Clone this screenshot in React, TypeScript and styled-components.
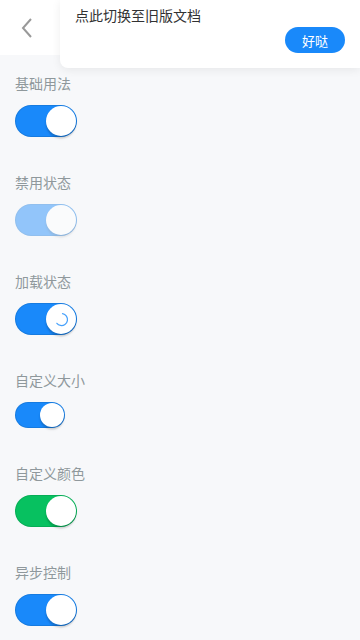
import React, { useState } from "react";
import styled, { createGlobalStyle } from "styled-components";

const GlobalStyle = createGlobalStyle`
  html, body {
    margin: 0;
    padding: 0;
    background: #f7f8fa;
    font-family: "Noto Sans CJK SC", "Noto Sans", sans-serif;
  }
  * { box-sizing: border-box; }
`;

const Page = styled.div`
  position: relative;
  width: 360px;
  min-height: 640px;
  background: #f7f8fa;
`;

const NavBar = styled.div`
  height: 55px;
  background: #fff;
  display: flex;
  align-items: center;
  padding-left: 20px;
`;

const Popup = styled.div`
  position: absolute;
  top: 0;
  left: 60px;
  right: 0;
  height: 68px;
  background: #fff;
  border-bottom-left-radius: 8px;
  box-shadow: 0 2px 10px rgba(0, 0, 0, 0.07);
  padding: 5px 15px 0;
  display: flex;
  flex-direction: column;
`;

const PopupText = styled.div`
  font-size: 14px;
  line-height: 20px;
  color: #323233;
`;

const OkButton = styled.button`
  align-self: flex-end;
  margin-top: 2px;
  width: 60px;
  height: 26px;
  border: none;
  border-radius: 13px;
  background: #1989fa;
  color: #fff;
  font-size: 13px;
  font-family: inherit;
  padding: 0;
`;

const Section = styled.section`
  padding: 20px 15px 17px;
`;

const Title = styled.h2`
  margin: 0 0 14px;
  font-size: 14px;
  line-height: 16px;
  font-weight: 400;
  color: #8f989c;
`;

const Track = styled.div<{ $size: number; $on: boolean; $color: string; $disabled?: boolean }>`
  position: relative;
  width: ${(p) => p.$size * 2 + 2}px;
  height: ${(p) => p.$size + 2}px;
  border: 1px solid rgba(0, 0, 0, 0.1);
  border-radius: ${(p) => p.$size}px;
  background: ${(p) => (p.$on ? p.$color : "#fff")};
  opacity: ${(p) => (p.$disabled ? 0.45 : 1)};
  cursor: pointer;
`;

const Knob = styled.div<{ $size: number; $on: boolean }>`
  position: absolute;
  top: 0;
  left: 0;
  width: ${(p) => p.$size}px;
  height: ${(p) => p.$size}px;
  border-radius: 50%;
  background: #fff;
  box-shadow: 0 3px 1px 0 rgba(0, 0, 0, 0.05), 0 2px 2px 0 rgba(0, 0, 0, 0.1),
    0 3px 3px 0 rgba(0, 0, 0, 0.05);
  transform: translateX(${(p) => (p.$on ? p.$size : 0)}px);
  display: flex;
  align-items: center;
  justify-content: center;
`;

const Spinner = () => (
  <svg width="15" height="15" viewBox="0 0 30 30">
    <circle
      cx="15"
      cy="15"
      r="12"
      fill="none"
      stroke="#1989fa"
      strokeWidth="2.5"
      strokeLinecap="round"
      strokeDasharray="45 80"
      transform="rotate(-80 15 15)"
      opacity="0.8"
    />
  </svg>
);

type SwitchProps = {
  size?: number;
  color?: string;
  disabled?: boolean;
  loading?: boolean;
  initial?: boolean;
};

const Switch = ({ size = 30, color = "#1989fa", disabled, loading, initial = true }: SwitchProps) => {
  const [on, setOn] = useState(initial);
  return (
    <Track
      $size={size}
      $on={on}
      $color={color}
      $disabled={disabled}
      onClick={() => !disabled && !loading && setOn(!on)}
    >
      <Knob $size={size} $on={on}>
        {loading && <Spinner />}
      </Knob>
    </Track>
  );
};

const demos: { title: string; props: SwitchProps }[] = [
  { title: "基础用法", props: {} },
  { title: "禁用状态", props: { disabled: true } },
  { title: "加载状态", props: { loading: true } },
  { title: "自定义大小", props: { size: 24 } },
  { title: "自定义颜色", props: { color: "#07c160" } },
  { title: "异步控制", props: {} },
];

const App = () => {
  return (
    <Page>
      <GlobalStyle />
      <NavBar>
        <svg width="14" height="22" viewBox="0 0 14 22">
          <path d="M11 2 L3 11 L11 20" fill="none" stroke="#999" strokeWidth="2" />
        </svg>
      </NavBar>
      {demos.map((d) => (
        <Section key={d.title}>
          <Title>{d.title}</Title>
          <Switch {...d.props} />
        </Section>
      ))}
      <Popup>
        <PopupText>点此切换至旧版文档</PopupText>
        <OkButton>好哒</OkButton>
      </Popup>
    </Page>
  );
};

export default App;
